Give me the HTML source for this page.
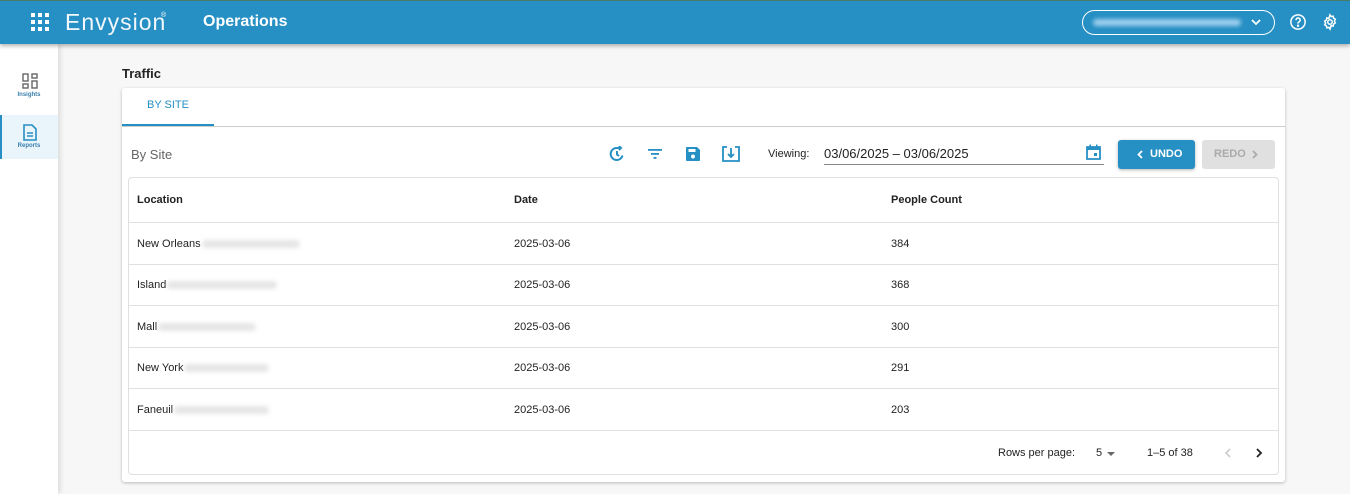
<!DOCTYPE html>
<html><head><meta charset="utf-8"><style>
*{box-sizing:border-box;margin:0;padding:0}
body{width:1350px;height:494px;overflow:hidden;background:#f7f7f7;font-family:"Liberation Sans",Arial,sans-serif;position:relative;color:#222}
.hdr{position:absolute;left:0;top:0;width:1350px;height:44px;background:#268fc4;border-top:1px solid #4a7a6a;box-shadow:0 2px 4px rgba(0,0,0,.3);z-index:3}
.side{position:absolute;left:0;top:44px;width:58px;height:450px;background:#fff;box-shadow:2px 0 5px rgba(0,0,0,.12);z-index:2}
.abs{position:absolute}
.card{position:absolute;left:122px;top:88px;width:1163px;height:394px;background:#fff;border-radius:3px;box-shadow:0 1px 3px rgba(0,0,0,.25)}
.tbl{position:absolute;left:6px;top:89px;width:1151px;height:298px;border:1px solid #e0e0e0;border-radius:4px}
.row{position:absolute;left:0;width:1149px;border-bottom:1px solid #e0e0e0;font-size:11px;color:#222}
.row span{position:absolute;top:50%;transform:translateY(-50%)}
.blur{display:inline-block;height:8px;background:#e6e6e6;border-radius:4px;filter:blur(2px);vertical-align:middle;margin-left:1px}
</style></head><body>
<div class="hdr">
 <svg class="abs" style="left:31px;top:12px" width="18" height="18" viewBox="0 0 18 18" fill="#fff">
  <rect x="0" y="0" width="4" height="4"/><rect x="7" y="0" width="4" height="4"/><rect x="14" y="0" width="4" height="4"/>
  <rect x="0" y="7" width="4" height="4"/><rect x="7" y="7" width="4" height="4"/><rect x="14" y="7" width="4" height="4"/>
  <rect x="0" y="14" width="4" height="4"/><rect x="7" y="14" width="4" height="4"/><rect x="14" y="14" width="4" height="4"/></svg>
 <div class="abs" style="left:65px;top:8px;font-size:23px;color:#f2f7fb;letter-spacing:1px">Envysion</div>
 <div class="abs" style="left:161px;top:11px;font-size:7px;color:#fff">®</div>
 <div class="abs" style="left:203px;top:12px;font-size:16px;font-weight:bold;color:#fff">Operations</div>
 <div class="abs" style="left:1082px;top:9px;width:193px;height:25px;border:1.5px solid #fff;border-radius:13px">
  <div class="abs" style="left:10px;top:8px;width:148px;height:7px;background:#9fd0ee;border-radius:4px;filter:blur(2px)"></div>
  <svg class="abs" style="left:168px;top:7px" width="10" height="8" viewBox="0 0 10 8"><path d="M1 2l4 4 4-4" stroke="#fff" stroke-width="1.8" fill="none"/></svg>
 </div>
 <svg class="abs" style="left:1289px;top:12px" width="18" height="18" viewBox="0 0 24 24" fill="none" stroke="#fff" stroke-width="2"><circle cx="12" cy="12" r="9.5"/><path d="M9.3 9.5a2.8 2.8 0 1 1 3.7 2.6c-.7.3-1 .8-1 1.5v.6"/><circle cx="12" cy="17" r=".6" fill="#fff"/></svg>
 <svg class="abs" style="left:1321px;top:12px" width="18" height="18" viewBox="0 0 24 24" fill="none" stroke="#fff" stroke-width="2"><circle cx="12" cy="12" r="3"/><path d="M12 2.5l1.5 2.3 2.7-.6.6 2.7 2.3 1.5-1.3 2.4 1.3 2.4-2.3 1.5-.6 2.7-2.7-.6L12 21.5l-1.5-2.3-2.7.6-.6-2.7-2.3-1.5 1.3-2.4-1.3-2.4 2.3-1.5.6-2.7 2.7.6z"/></svg>
</div>
<div class="side">
 <svg class="abs" style="left:22px;top:29px" width="16" height="16" viewBox="0 0 16 16" fill="none" stroke="#666" stroke-width="1.4"><rect x="1" y="1" width="5" height="7"/><rect x="10" y="1" width="5" height="4"/><rect x="1" y="11" width="5" height="4"/><rect x="10" y="8" width="5" height="7"/></svg>
 <div class="abs" style="left:0;top:48px;width:58px;text-align:center;font-size:6px;color:#3a7fae;font-weight:bold">Insights</div>
 <div class="abs" style="left:0;top:71px;width:58px;height:44px;background:#e9f4fb;border-left:2px solid #268fc4"></div>
 <svg class="abs" style="left:23px;top:80px" width="14" height="17" viewBox="0 0 14 17" fill="none" stroke="#268fc4" stroke-width="1.6"><path d="M1 1h8l4 4v11H1z"/><path d="M4 9h6M4 12h6"/></svg>
 <div class="abs" style="left:0;top:99px;width:58px;text-align:center;font-size:6px;color:#3a7fae;font-weight:bold">Reports</div>
</div>
<div class="abs" style="left:122px;top:66px;font-size:13px;font-weight:bold;color:#222">Traffic</div>
<div class="card">
 <div class="abs" style="left:0;top:0;width:1163px;height:39px;border-bottom:1px solid #ccc"></div>
 <div class="abs" style="left:0;top:11px;width:92px;text-align:center;font-size:11px;color:#268fc4">BY SITE</div>
 <div class="abs" style="left:0;top:36px;width:92px;height:2px;background:#268fc4"></div>
 <div class="abs" style="left:9px;top:59px;font-size:13px;color:#666">By Site</div>
 <svg class="abs" style="left:487px;top:58px" width="16" height="16" viewBox="0 0 16 16" fill="none" stroke="#268fc4" stroke-width="2"><path d="M13.5 9.5A6 6 0 1 1 8 2h3"/><path d="M8 5v3.5l2 1.5"/><path d="M10 0l2 2-2 2" fill="#268fc4"/></svg>
 <svg class="abs" style="left:525px;top:60px" width="16" height="12" viewBox="0 0 16 12" fill="#268fc4"><rect x="1" y="1" width="14" height="1.8"/><rect x="4" y="5" width="8" height="1.8"/><rect x="6.5" y="9" width="3" height="1.8"/></svg>
 <svg class="abs" style="left:564px;top:59px" width="14" height="14" viewBox="0 0 14 14"><path d="M0 1a1 1 0 0 1 1-1h10l3 3v10a1 1 0 0 1-1 1H1a1 1 0 0 1-1-1z" fill="#268fc4"/><rect x="2.5" y="2" width="7" height="3" fill="#fff"/><circle cx="7" cy="9.5" r="2" fill="#fff"/></svg>
 <svg class="abs" style="left:600px;top:58px" width="18" height="16" viewBox="0 0 18 16" fill="none" stroke="#268fc4" stroke-width="1.8"><path d="M5 1H1v14h16V1h-4"/><path d="M9 2v9M6 8l3 3 3-3"/></svg>
 <div class="abs" style="left:646px;top:60px;font-size:11px;color:#222">Viewing:</div>
 <div class="abs" style="left:702px;top:58px;font-size:13px;color:#222">03/06/2025 – 03/06/2025</div>
 <div class="abs" style="left:702px;top:76px;width:280px;height:1px;background:#888"></div>
 <svg class="abs" style="left:964px;top:56px" width="15" height="16" viewBox="0 0 15 16"><path d="M1 3h13v12H1z" fill="none" stroke="#268fc4" stroke-width="1.8"/><rect x="1" y="3" width="13" height="3" fill="#268fc4"/><rect x="3.5" y="0.5" width="1.5" height="3" fill="#268fc4"/><rect x="10" y="0.5" width="1.5" height="3" fill="#268fc4"/><rect x="8" y="9" width="3" height="3" fill="#268fc4"/></svg>
 <div class="abs" style="left:996px;top:52px;width:77px;height:29px;background:#268fc4;border-radius:3px;box-shadow:0 1px 3px rgba(0,0,0,.3);color:#fff;font-size:11px;font-weight:bold;line-height:29px">
  <svg class="abs" style="left:19px;top:10px" width="6" height="9" viewBox="0 0 6 9"><path d="M5 1L1.5 4.5 5 8" stroke="#fff" stroke-width="1.8" fill="none"/></svg>
  <span class="abs" style="left:32px">UNDO</span></div>
 <div class="abs" style="left:1080px;top:52px;width:73px;height:29px;background:#e0e0e0;border-radius:3px;color:#aaa;font-size:11px;font-weight:bold;line-height:29px">
  <span class="abs" style="left:12px">REDO</span>
  <svg class="abs" style="left:50px;top:10px" width="6" height="9" viewBox="0 0 6 9"><path d="M1 1l3.5 3.5L1 8" stroke="#aaa" stroke-width="1.8" fill="none"/></svg></div>
 <div class="tbl">
  <div class="row" style="top:0;height:45px;font-weight:bold"><span style="left:8px">Location</span><span style="left:385px">Date</span><span style="left:762px">People Count</span></div>
  <div class="row" style="top:45px;height:42px"><span style="left:8px">New Orleans<i class="blur" style="width:98px"></i></span><span style="left:385px">2025-03-06</span><span style="left:762px">384</span></div>
  <div class="row" style="top:87px;height:41px"><span style="left:8px">Island<i class="blur" style="width:110px"></i></span><span style="left:385px">2025-03-06</span><span style="left:762px">368</span></div>
  <div class="row" style="top:128px;height:42px"><span style="left:8px">Mall<i class="blur" style="width:98px"></i></span><span style="left:385px">2025-03-06</span><span style="left:762px">300</span></div>
  <div class="row" style="top:170px;height:41px"><span style="left:8px">New York<i class="blur" style="width:85px"></i></span><span style="left:385px">2025-03-06</span><span style="left:762px">291</span></div>
  <div class="row" style="top:211px;height:42px"><span style="left:8px">Faneuil<i class="blur" style="width:95px"></i></span><span style="left:385px">2025-03-06</span><span style="left:762px">203</span></div>
  <div class="abs" style="left:869px;top:269px;font-size:11px;color:#222">Rows per page:</div>
  <div class="abs" style="left:967px;top:269px;font-size:11px;color:#222">5</div>
  <svg class="abs" style="left:978px;top:274px" width="8" height="5" viewBox="0 0 8 5"><path d="M0 0h8L4 4z" fill="#666"/></svg>
  <div class="abs" style="left:1018px;top:269px;font-size:11px;color:#222">1–5 of 38</div>
  <svg class="abs" style="left:1095px;top:270px" width="7" height="10" viewBox="0 0 7 10"><path d="M6 1L2 5l4 4" stroke="#ccc" stroke-width="1.6" fill="none"/></svg>
  <svg class="abs" style="left:1127px;top:270px" width="7" height="10" viewBox="0 0 7 10"><path d="M1 1l4 4-4 4" stroke="#222" stroke-width="1.8" fill="none"/></svg>
 </div>
</div>
</body></html>
